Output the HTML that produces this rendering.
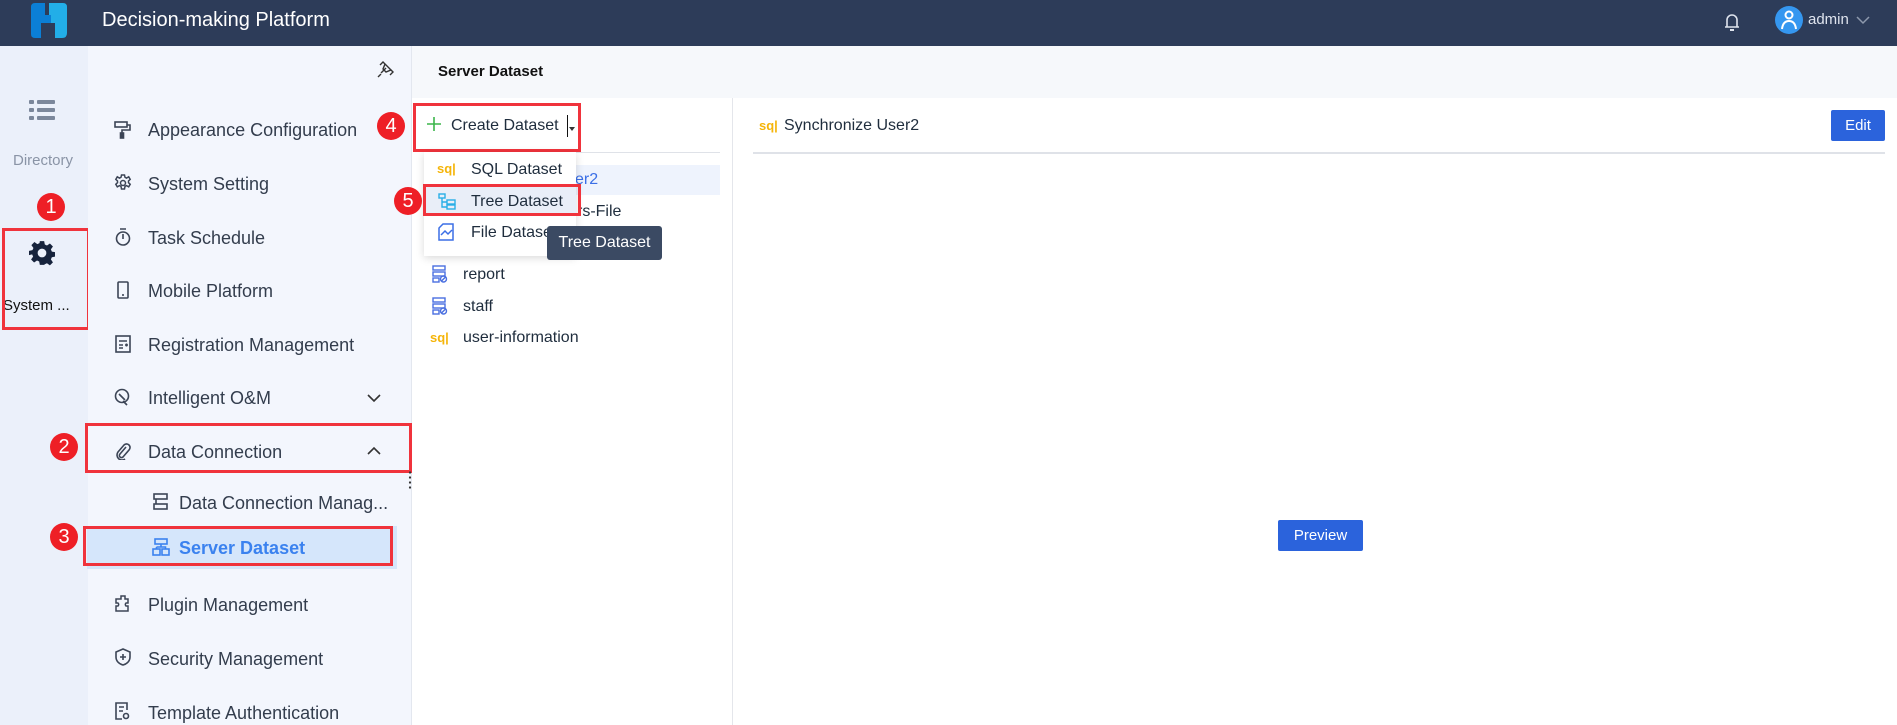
<!DOCTYPE html>
<html><head><meta charset="utf-8"><style>
*{margin:0;padding:0;box-sizing:border-box}
body{width:1897px;height:725px;overflow:hidden;font-family:"Liberation Sans",Arial,sans-serif;background:#fff;position:relative;color:#1f2d3d}
.a{position:absolute}
.hdr{left:0;top:0;width:1897px;height:46px;background:#2d3c59}
.rail{left:0;top:46px;width:88px;height:679px;background:#ebf0fa}
.menu{left:88px;top:46px;width:324px;height:679px;background:#f3f6fd;border-right:1px solid #e3e7ef}
.mi{position:absolute;left:148px;font-size:18px;color:#333d4d;line-height:22px;white-space:nowrap}
.ic{position:absolute;left:114px;width:18px;height:18px}
.red{position:absolute;border:3px solid #f0333c}
.badge{position:absolute;width:28px;height:28px;border-radius:50%;background:#ee1f26;color:#fff;font-size:20px;text-align:center;line-height:28px}
.li{position:absolute;font-size:16px;color:#1f2d3d;line-height:20px;white-space:nowrap}
.sql{position:absolute;color:#f5b50a;font-size:13px;font-weight:bold;letter-spacing:0}
</style></head><body>
<div class="a hdr"></div>
<svg class="a" style="left:31px;top:3px" width="36" height="35" viewBox="0 0 36 35"><path d="M4 0H14V12H10V35H4Q0 35 0 31V4Q0 0 4 0Z" fill="#0b7fd6"/><path d="M18 0H32Q36 0 36 4V30Q36 35 31 35H24V20H18Z" fill="#22aee8"/><rect x="10" y="12" width="10" height="8" fill="#0b7fd6"/></svg>
<div class="a" style="left:102px;top:9px;color:#fff;font-size:20px">Decision-making Platform</div>
<svg class="a" style="left:1724px;top:12px" width="16" height="20" viewBox="0 0 16 20"><path d="M3 15V8a5 5 0 0110 0v7h2H1z" fill="none" stroke="#dfe4ee" stroke-width="1.6"/><rect x="6" y="17" width="4" height="2" fill="#dfe4ee"/></svg>
<div class="a" style="left:1775px;top:6px;width:28px;height:28px;border-radius:50%;background:#3597f0"></div>
<svg class="a" style="left:1779px;top:9px" width="20" height="22" viewBox="0 0 20 22"><circle cx="10" cy="6" r="3.5" fill="none" stroke="#fff" stroke-width="2"/><path d="M3 20Q4 12 10 12Q16 12 17 20" fill="none" stroke="#fff" stroke-width="2"/></svg>
<div class="a" style="left:1808px;top:11px;color:#dfe4ee;font-size:15px">admin</div>
<svg class="a" style="left:1856px;top:15px" width="14" height="10"><path d="M1 2l6 6 6-6" fill="none" stroke="#8e99ad" stroke-width="1.5"/></svg>

<div class="a rail"></div>
<svg class="a" style="left:29px;top:99px" width="26" height="22"><g fill="#7b879b"><rect x="0" y="1" width="5" height="4" rx="1"/><rect x="8" y="1" width="18" height="4" rx="1"/><rect x="0" y="9" width="5" height="4" rx="1"/><rect x="8" y="9" width="18" height="4" rx="1"/><rect x="0" y="17" width="5" height="4" rx="1"/><rect x="8" y="17" width="18" height="4" rx="1"/></g></svg>
<div class="a" style="left:0;width:86px;top:152px;text-align:center;font-size:15px;color:#8a94a6">Directory</div>
<svg class="a" style="left:29px;top:240px" width="26" height="26" viewBox="0 0 24 24"><path fill="#16233c" d="M10 1h4l.6 3.2 2 .9 2.7-1.9 2.8 2.8-1.9 2.7.9 2 3.2.6v4l-3.2.6-.9 2 1.9 2.7-2.8 2.8-2.7-1.9-2 .9L14 23h-4l-.6-3.2-2-.9-2.7 1.9-2.8-2.8 1.9-2.7-.9-2L0 14v-4l3.2-.6.9-2L2.2 4.7 5 1.9l2.7 1.9 2-.9zM12 8a4 4 0 100 8 4 4 0 000-8z"/></svg>
<div class="a" style="left:3px;top:297px;font-size:15px;color:#111">System ...</div>
<div class="red" style="left:2px;top:228px;width:88px;height:102px"></div>
<div class="badge" style="left:37px;top:193px">1</div>

<div class="a menu"></div>
<svg class="a" style="left:377px;top:60px" width="18" height="18" viewBox="0 0 18 18"><path d="M6 2l10 10M3 5l3-3 2 2-2 5 3 3 5-2 2 2-3 3M4 14l-3 3M9 8l-5 5" fill="none" stroke="#333" stroke-width="1.4"/></svg>

<svg class="ic" style="top:121px" viewBox="0 0 18 18"><g fill="none" stroke="#3c4556" stroke-width="1.6"><rect x="1" y="1" width="12" height="5"/><path d="M13 4h3v5H8v3"/><rect x="6.5" y="12" width="3" height="5" fill="#3c4556"/></g></svg>
<div class="mi" style="top:119px">Appearance Configuration</div>
<svg class="ic" style="top:174px" viewBox="0 0 18 18"><path fill="none" stroke="#3c4556" stroke-width="1.5" d="M7.5 1h3l.5 2.3 1.5.8 2.2-1.3 1.5 2.6-1.700 1.6v1.7l1.7 1.6-1.5 2.6-2.2-1.3-1.5.8-.5 2.6h-3l-.5-2.6-1.5-.8-2.2 1.3-1.5-2.6 1.7-1.6V7L1.8 5.4 3.3 2.8l2.2 1.3L7 3.3z"/><circle cx="9" cy="9" r="2.5" fill="none" stroke="#3c4556" stroke-width="1.5"/></svg>
<div class="mi" style="top:173px">System Setting</div>
<svg class="ic" style="top:228px" viewBox="0 0 18 18"><g fill="none" stroke="#3c4556" stroke-width="1.6"><circle cx="9" cy="10.5" r="6.5"/><path d="M6 1h6M9 6v5"/></g></svg>
<div class="mi" style="top:227px">Task Schedule</div>
<svg class="ic" style="top:281px" viewBox="0 0 18 18"><g fill="none" stroke="#3c4556" stroke-width="1.6"><rect x="4" y="1" width="10" height="16" rx="1"/><path d="M8 14h2"/></g></svg>
<div class="mi" style="top:280px">Mobile Platform</div>
<svg class="ic" style="top:335px" viewBox="0 0 18 18"><g fill="none" stroke="#3c4556" stroke-width="1.6"><rect x="2" y="1" width="14" height="16"/><path d="M5 6h8M5 10h4M11 10h3M12.5 8.5v3M5 13h4"/></g></svg>
<div class="mi" style="top:334px">Registration Management</div>
<svg class="ic" style="top:388px" viewBox="0 0 18 18"><g fill="none" stroke="#3c4556" stroke-width="1.6"><circle cx="8" cy="8" r="6.5"/><path d="M5 6l6 6M9 13l4 4"/></g></svg>
<div class="mi" style="top:387px">Intelligent O&amp;M</div>
<svg class="a" style="left:366px;top:392px" width="16" height="12"><path d="M2 3l6 6 6-6" fill="none" stroke="#333" stroke-width="1.6"/></svg>
<svg class="ic" style="top:442px" viewBox="0 0 18 18"><path d="M12 5L6 12a2 2 0 003 3l6-7a3.5 3.5 0 00-5-5L4 10a5 5 0 007 7" fill="none" stroke="#3c4556" stroke-width="1.6"/></svg>
<div class="mi" style="top:441px">Data Connection</div>
<svg class="a" style="left:366px;top:445px" width="16" height="12"><path d="M2 9l6-6 6 6" fill="none" stroke="#333" stroke-width="1.6"/></svg>
<div class="red" style="left:85px;top:423px;width:327px;height:50px"></div>
<div class="badge" style="left:50px;top:433px">2</div>
<div class="a" style="left:408px;top:470px;width:4px;height:20px;background:radial-gradient(circle,#333 1px,transparent 1.3px) 0 0/4px 5px"></div>

<svg class="ic" style="left:152px;top:493px" viewBox="0 0 18 18"><g fill="none" stroke="#3c4556" stroke-width="1.6"><rect x="2" y="1" width="13" height="5"/><rect x="2" y="11" width="13" height="5"/><path d="M4 6v5"/></g></svg>
<div class="mi" style="left:179px;top:492px">Data Connection Manag...</div>
<div class="a" style="left:87px;top:526px;width:310px;height:43px;background:#d5e6fb"></div>
<svg class="ic" style="left:152px;top:538px" viewBox="0 0 18 18"><g fill="none" stroke="#3b82ef" stroke-width="1.6"><rect x="3" y="1" width="12" height="5"/><rect x="1" y="11" width="7" height="6"/><rect x="10" y="11" width="7" height="6"/><path d="M9 6v3M4.5 9h9v2M4.5 9v2"/></g></svg>
<div class="mi" style="left:179px;top:537px;color:#3b82ef;font-weight:bold">Server Dataset</div>
<div class="red" style="left:83px;top:526px;width:310px;height:40px"></div>
<div class="badge" style="left:50px;top:523px">3</div>

<svg class="ic" style="top:595px" viewBox="0 0 18 18"><path d="M7 1h4v3h3v4h-2a2 2 0 000 3h2v5H2v-5h2a2 2 0 000-3H2V4h5z" fill="none" stroke="#3c4556" stroke-width="1.5"/></svg>
<div class="mi" style="top:594px">Plugin Management</div>
<svg class="ic" style="top:648px" viewBox="0 0 18 18"><g fill="none" stroke="#3c4556" stroke-width="1.6"><path d="M9 1l7 3v5c0 4-3 7-7 8-4-1-7-4-7-8V4z"/><path d="M9 6v6M6 9h6"/></g></svg>
<div class="mi" style="top:648px">Security Management</div>
<svg class="ic" style="top:702px" viewBox="0 0 18 18"><g fill="none" stroke="#3c4556" stroke-width="1.6"><path d="M13 8V1H2v16h6"/><path d="M5 5h5M5 9h4"/><circle cx="12" cy="14" r="2.5"/></g></svg>
<div class="mi" style="top:702px">Template Authentication</div>

<!-- right area -->
<div class="a" style="left:412px;top:46px;width:1485px;height:52px;background:#f6f8fb"></div>
<div class="a" style="left:438px;top:63px;font-size:15px;font-weight:bold;color:#111">Server Dataset</div>
<div class="a" style="left:732px;top:98px;width:1px;height:627px;background:#e4e6eb"></div>
<div class="a" style="left:426px;top:152px;width:294px;height:1px;background:#dfe2e8"></div>
<div class="a" style="left:753px;top:152px;width:1132px;height:2px;background:#dfe2e8"></div>

<svg class="a" style="left:427px;top:117px" width="14" height="14"><path d="M7 0v14M0 7h14" stroke="#3bb54a" stroke-width="1.6"/></svg>
<div class="li" style="left:451px;top:116px">Create Dataset</div>
<div class="a" style="left:567px;top:115px;width:1px;height:22px;background:#111"></div>
<div class="a" style="left:569px;top:127px;border:3px solid transparent;border-top:4px solid #333"></div>
<div class="red" style="left:413px;top:103px;width:168px;height:49px"></div>
<div class="badge" style="left:377px;top:112px">4</div>

<div class="a" style="left:424px;top:165px;width:296px;height:30px;background:#eef3fd"></div>
<div class="li" style="left:575px;top:170px;color:#3b6fe6">er2</div>
<div class="li" style="left:577px;top:202px">rs-File</div>
<svg class="a" style="left:432px;top:265px" width="16" height="18" viewBox="0 0 16 18"><g fill="none" stroke="#4a6fe0" stroke-width="1.4"><rect x="1" y="1" width="12" height="4"/><rect x="1" y="7" width="12" height="4"/><rect x="1" y="13" width="6" height="4"/><circle cx="11.5" cy="14" r="3"/><path d="M9.5 16l4-4"/></g></svg>
<div class="li" style="left:463px;top:265px">report</div>
<svg class="a" style="left:432px;top:297px" width="16" height="18" viewBox="0 0 16 18"><g fill="none" stroke="#4a6fe0" stroke-width="1.4"><rect x="1" y="1" width="12" height="4"/><rect x="1" y="7" width="12" height="4"/><rect x="1" y="13" width="6" height="4"/><circle cx="11.5" cy="14" r="3"/><path d="M9.5 16l4-4"/></g></svg>
<div class="li" style="left:463px;top:297px">staff</div>
<div class="sql" style="left:430px;top:330px">sq|</div>
<div class="li" style="left:463px;top:328px">user-information</div>

<!-- dropdown -->
<div class="a" style="left:424px;top:152px;width:152px;height:104px;background:#fff;box-shadow:0 2px 8px rgba(0,0,0,.15)"></div>
<div class="sql" style="left:437px;top:161px">sq|</div>
<div class="li" style="left:471px;top:160px">SQL Dataset</div>
<div class="a" style="left:424px;top:186px;width:152px;height:30px;background:#e9eef8"></div>
<svg class="a" style="left:438px;top:193px" width="18" height="17" viewBox="0 0 18 17"><g fill="none" stroke="#29aee6" stroke-width="1.4"><rect x="1" y="1" width="6" height="4"/><rect x="9" y="7" width="8" height="4"/><rect x="9" y="12" width="8" height="4"/><path d="M4 5v9h5M4 9h5"/></g></svg>
<div class="li" style="left:471px;top:192px">Tree Dataset</div>
<svg class="a" style="left:438px;top:223px" width="16" height="18" viewBox="0 0 16 18"><g fill="none" stroke="#3b6fe6" stroke-width="1.5"><path d="M5 1h10v16H1V5z"/><path d="M3 12l4-4 3 3 4-4"/></g></svg>
<div class="li" style="left:471px;top:223px">File Datase</div>
<div class="red" style="left:423px;top:184px;width:158px;height:32px"></div>
<div class="badge" style="left:394px;top:187px">5</div>
<div class="a" style="left:547px;top:226px;width:115px;height:34px;background:#3b4a63;border-radius:3px;color:#fff;font-size:16px;line-height:34px;text-align:center">Tree Dataset</div>

<div class="sql" style="left:759px;top:118px">sq|</div>
<div class="li" style="left:784px;top:116px">Synchronize User2</div>
<div class="a" style="left:1831px;top:110px;width:54px;height:31px;background:#2b63dc;border-radius:2px;color:#fff;font-size:15px;line-height:31px;text-align:center">Edit</div>
<div class="a" style="left:1278px;top:520px;width:85px;height:31px;background:#2b63dc;border-radius:2px;color:#fff;font-size:15px;line-height:31px;text-align:center">Preview</div>
</body></html>
